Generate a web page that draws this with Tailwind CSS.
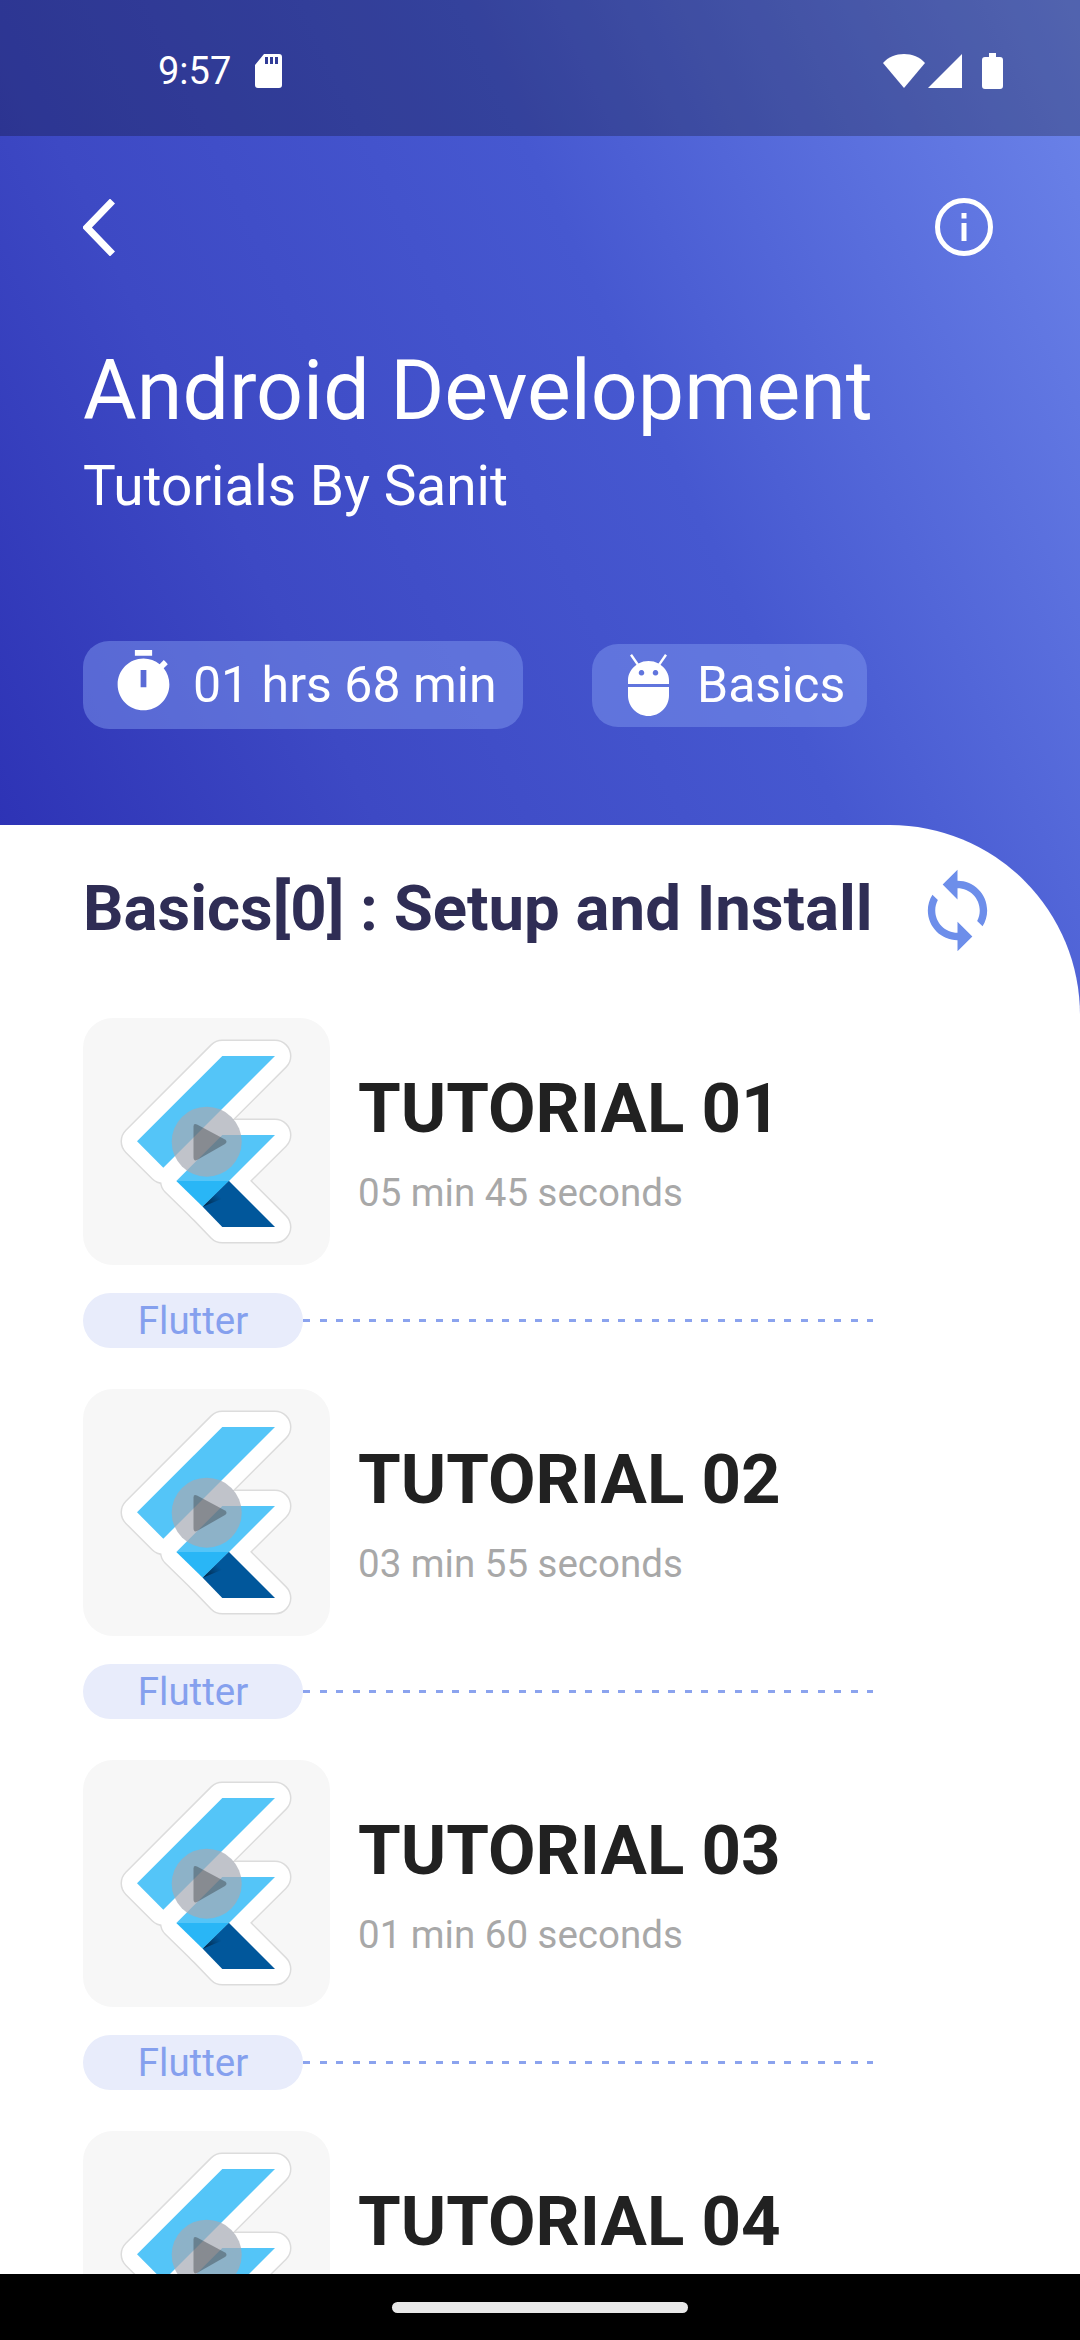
<!DOCTYPE html>
<html>
<head>
  <title>Tutorials</title>
  <script src="https://cdn.jsdelivr.net/npm/@tailwindcss/browser@4"></script>
</head>
<body class="bg-white">
  <svg class="absolute w-0 h-0">
    <defs>
      <linearGradient id="fold" x1="0" y1="1" x2="1" y2="0">
        <stop offset="0" stop-color="#01223f"/>
        <stop offset="0.5" stop-color="#01579b"/>
      </linearGradient>
      <symbol id="thumb" viewBox="0 0 247 247">
        <g stroke="#dcdcdc" stroke-width="33" stroke-linejoin="round" fill="#dcdcdc">
          <polygon points="139.3,38 192,38 80.3,149.7 54,123.3"/>
          <polygon points="139.3,117 192,117 119.7,188.7 93.3,163"/>
          <polygon points="146,163 192,209 139.3,209 119.7,188.7"/>
        </g>
        <g stroke="#ffffff" stroke-width="30" stroke-linejoin="round" fill="#ffffff">
          <polygon points="139.3,38 192,38 80.3,149.7 54,123.3"/>
          <polygon points="139.3,117 192,117 119.7,188.7 93.3,163"/>
          <polygon points="146,163 192,209 139.3,209 119.7,188.7"/>
        </g>
        <polygon fill="#54c5f8" points="139.3,38 192,38 80.3,149.7 54,123.3"/>
        <polygon fill="#54c5f8" points="139.3,117 192,117 146,163 119.7,163 93.3,163"/>
        <polygon fill="#29b6f6" points="93.3,163 146,163 119.7,188.7"/>
        <polygon fill="#01579b" points="146,163 192,209 139.3,209 119.7,188.7"/>
        <polygon fill="url(#fold)" points="146,163 119.7,188.7 148,177"/>
        <circle cx="123.7" cy="123.7" r="35" fill="rgb(165,170,180)" fill-opacity="0.7"/>
        <path d="M114 106.500 L142 121.500 Q145 123.700 142 126 L114 142 Q110.500 143.500 110.500 139 L110.500 108.500 Q110.500 105 114 106.500Z" fill="rgb(50,55,60)" fill-opacity="0.4"/>
      </symbol>
    </defs>
  </svg>

  <div class="w-[1080px] h-[2340px] overflow-hidden flex flex-col font-[Roboto,sans-serif]">
    <!-- Header -->
    <div class="h-[1015px] shrink-0 text-white bg-[linear-gradient(65deg,#2a2eb2,#3d49c4_30%,#4658d0_60%,#6d85ea)]">
      <div class="h-[136px] bg-black/25 flex items-center justify-between pt-[6px] pl-[158px] pr-[77px]">
        <div class="flex items-center gap-[24px]">
          <span class="text-[38px] leading-[44px] text-white">9:57</span>
          <svg class="w-[27px] h-[34px]" viewBox="0 0 27 34"><path fill="#fff" fill-rule="evenodd" d="M9 0H24a3 3 0 0 1 3 3V31a3 3 0 0 1-3 3H3a3 3 0 0 1-3-3V11ZM10 3V10H13V3ZM15 3V10H18V3ZM20 3V10H23V3Z"/></svg>
        </div>
        <div class="flex items-center">
          <svg class="w-[42px] h-[34px]" viewBox="0 0 42 34"><path fill="#fff" d="M21 34 0 9C5 3 13 0 21 0S37 3 42 9Z"/></svg>
          <svg class="w-[34px] h-[34px] ml-[3px]" viewBox="0 0 34 34"><path fill="#fff" d="M34 0V34H0Z"/></svg>
          <svg class="w-[21px] h-[36px] ml-[20px]" viewBox="0 0 21 36"><path fill="#fff" d="M7 0H14V4H18a3 3 0 0 1 3 3V33a3 3 0 0 1-3 3H3a3 3 0 0 1-3-3V7a3 3 0 0 1 3-3H7Z"/></svg>
        </div>
      </div>

      <div class="pt-[62px] px-[83px]">
        <div class="flex items-center justify-between pr-[4px]">
          <svg class="w-[32px] h-[57px]" viewBox="0 0 32 57"><polyline points="29.500,2 4,28.500 29.500,55" fill="none" stroke="#fff" stroke-width="7"/></svg>
          <svg class="w-[58px] h-[58px]" viewBox="0 0 58 58">
            <circle cx="29" cy="29" r="26.500" fill="none" stroke="#fff" stroke-width="5"/>
            <rect x="26.500" y="25" width="5" height="18" fill="#fff"/>
            <rect x="26.500" y="15" width="5" height="5.500" fill="#fff"/>
          </svg>
        </div>
        <h1 class="mt-[88px] text-[82.5px] leading-[94px] font-normal">Android Development</h1>
        <p class="mt-[16px] text-[55px] leading-[64px]">Tutorials By Sanit</p>

        <div class="mt-[123px] flex items-center gap-[69px]">
          <div class="h-[88px] w-[440px] rounded-[26px] bg-[#7d96ee]/50 flex items-center pl-[26px]">
            <svg class="w-[69px] h-[69px] -mt-[7px] shrink-0" viewBox="0 0 24 24"><path fill="#fff" fill-rule="evenodd" d="M15 1H9v2h6V1zm-4 13h2V8h-2v6zm8.030-6.610l1.420-1.420c-.43-.51-.9-.99-1.410-1.410l-1.420 1.420C16.070 4.740 14.120 4 12 4c-4.970 0-9 4.030-9 9s4.020 9 9 9 9-4.030 9-9c0-2.120-.74-4.070-1.970-5.610z"/></svg>
            <span class="ml-[15px] text-[50px] leading-[60px]">01 hrs 68 min</span>
          </div>
          <div class="h-[83px] w-[275px] rounded-[26px] bg-[#7d96ee]/50 flex items-center pl-[36px]">
            <svg class="w-[41px] h-[62px] shrink-0" viewBox="0 0 41 62"><path fill="#fff" fill-rule="evenodd" d="M4 0 10.500 9.500C13.500 7.800 17 7 20.500 7S27.500 7.800 30.500 9.500L37 0 39 1.500 32.500 10.800C37.500 14.500 41 20 41 26V30H0V26C0 20 3.500 14.500 8.500 10.800L2 1.500ZM13.500 16a2.800 2.800 0 1 0 .01 0ZM27.500 16a2.800 2.800 0 1 0 .01 0ZM0 33H41V41.500C41 52.800 31.800 62 20.500 62S0 52.800 0 41.500Z"/></svg>
            <span class="ml-[28px] text-[50px] leading-[60px]">Basics</span>
          </div>
        </div>
      </div>
    </div>

    <!-- Tutorial list -->
    <div class="-mt-[190px] flex-1 min-h-0 overflow-hidden bg-white rounded-tr-[190px] pt-[41px] pl-[83px] pr-[78px]">
      <div class="flex items-center justify-between h-[89px] mb-[63px]">
        <h2 class="pb-[4px] text-[63.5px] leading-[70px] font-bold text-[#2f2d55]">Basics[0] : Setup and Install</h2>
        <svg class="w-[89px] h-[89px] shrink-0" viewBox="0 0 24 24"><path fill="#6d8eea" d="M12 4V1L8 5l4 4V6c3.310 0 6 2.690 6 6 0 1.010-.25 1.970-.7 2.800l1.460 1.460C19.540 15.030 20 13.570 20 12c0-4.420-3.580-8-8-8zm0 14c-3.310 0-6-2.690-6-6 0-1.010.25-1.970.7-2.800L5.240 7.740C4.460 8.970 4 10.430 4 12c0 4.420 3.580 8 8 8v3l4-4-4-4v3z"/></svg>
      </div>

      <div class="flex flex-col">
        <div class="pb-[41px]">
          <div class="flex items-center gap-[28px]">
            <div class="w-[247px] h-[247px] shrink-0 rounded-[30px] bg-[#f7f7f7]"><svg class="w-full h-full"><use href="#thumb"/></svg></div>
            <div>
              <div class="text-[69px] leading-[80px] font-bold text-[#212121]">TUTORIAL 01</div>
              <div class="mt-[22px] text-[38.5px] leading-[44px] text-[#a8a8a8]">05 min 45 seconds</div>
            </div>
          </div>
          <div class="mt-[28px] flex items-center w-[790px]">
            <div class="w-[220px] h-[55px] shrink-0 rounded-full bg-[#e8ecfb] text-[#85a0ee] text-[38.5px] leading-[55px] text-center">Flutter</div>
            <div class="flex-1 h-[3px] bg-[repeating-linear-gradient(90deg,#8ba3ee_0,#8ba3ee_7px,transparent_7px,transparent_16.6px)]"></div>
          </div>
        </div>

        <div class="pb-[41px]">
          <div class="flex items-center gap-[28px]">
            <div class="w-[247px] h-[247px] shrink-0 rounded-[30px] bg-[#f7f7f7]"><svg class="w-full h-full"><use href="#thumb"/></svg></div>
            <div>
              <div class="text-[69px] leading-[80px] font-bold text-[#212121]">TUTORIAL 02</div>
              <div class="mt-[22px] text-[38.5px] leading-[44px] text-[#a8a8a8]">03 min 55 seconds</div>
            </div>
          </div>
          <div class="mt-[28px] flex items-center w-[790px]">
            <div class="w-[220px] h-[55px] shrink-0 rounded-full bg-[#e8ecfb] text-[#85a0ee] text-[38.5px] leading-[55px] text-center">Flutter</div>
            <div class="flex-1 h-[3px] bg-[repeating-linear-gradient(90deg,#8ba3ee_0,#8ba3ee_7px,transparent_7px,transparent_16.6px)]"></div>
          </div>
        </div>

        <div class="pb-[41px]">
          <div class="flex items-center gap-[28px]">
            <div class="w-[247px] h-[247px] shrink-0 rounded-[30px] bg-[#f7f7f7]"><svg class="w-full h-full"><use href="#thumb"/></svg></div>
            <div>
              <div class="text-[69px] leading-[80px] font-bold text-[#212121]">TUTORIAL 03</div>
              <div class="mt-[22px] text-[38.5px] leading-[44px] text-[#a8a8a8]">01 min 60 seconds</div>
            </div>
          </div>
          <div class="mt-[28px] flex items-center w-[790px]">
            <div class="w-[220px] h-[55px] shrink-0 rounded-full bg-[#e8ecfb] text-[#85a0ee] text-[38.5px] leading-[55px] text-center">Flutter</div>
            <div class="flex-1 h-[3px] bg-[repeating-linear-gradient(90deg,#8ba3ee_0,#8ba3ee_7px,transparent_7px,transparent_16.6px)]"></div>
          </div>
        </div>

        <div class="pb-[41px]">
          <div class="flex items-center gap-[28px]">
            <div class="w-[247px] h-[247px] shrink-0 rounded-[30px] bg-[#f7f7f7]"><svg class="w-full h-full"><use href="#thumb"/></svg></div>
            <div class="pb-[66px]">
              <div class="text-[69px] leading-[80px] font-bold text-[#212121]">TUTORIAL 04</div>
            </div>
          </div>
        </div>
      </div>
    </div>

    <!-- Gesture bar -->
    <div class="h-[66px] shrink-0 bg-black flex items-center justify-center">
      <div class="w-[296px] h-[11px] rounded-full bg-[#e8e8e8]"></div>
    </div>
  </div>
</body>
</html>
